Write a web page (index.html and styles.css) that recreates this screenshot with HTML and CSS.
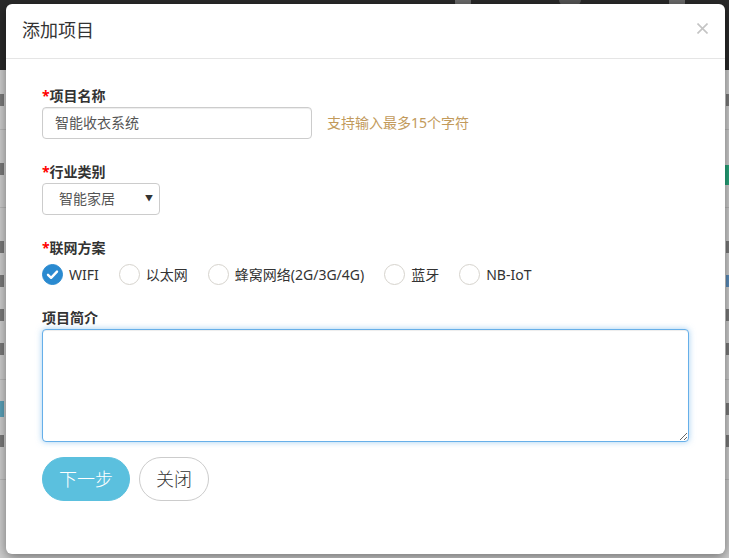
FILE: index.html
```html
<!DOCTYPE html>
<html lang="zh-CN">
<head>
<meta charset="utf-8">
<title>添加项目</title>
<link rel="stylesheet" href="styles.css">
</head>
<body>
<div class="page">
  <div class="navbar">
    <span class="nav-icon ni1"></span>
    <span class="nav-icon ni2"></span>
    <span class="nav-icon ni3"></span>
  </div>
  <div class="row row-a"><span class="mark-l"></span><span class="mark-r"></span></div>
  <div class="row row-b"><span class="mark-l"></span><span class="badge-green"></span></div>
  <div class="row row-c">
    <div class="line"><span class="mark-l"></span><span class="mark-r"></span></div>
    <div class="line"><span class="mark-l"></span><span class="mark-r blue"></span></div>
    <div class="line"><span class="mark-l"></span><span class="mark-r"></span></div>
    <div class="line"><span class="mark-l"></span><span class="mark-r"></span></div>
  </div>
  <div class="row row-d">
    <div class="line"><span class="mark-l teal"></span><span class="mark-r"></span></div>
    <div class="line"><span class="mark-l"></span><span class="mark-r"></span></div>
  </div>
</div>

<div class="modal">
  <div class="modal-header">
    <h4 class="modal-title">添加项目</h4>
    <button class="close" type="button" aria-label="关闭">
      <svg width="11" height="11" viewBox="0 0 11 11"><path d="M0.5 0.5L10.5 10.5M10.5 0.5L0.5 10.5" stroke="#c4c4c4" stroke-width="1.6" fill="none"/></svg>
    </button>
  </div>
  <div class="modal-body">
    <div class="group">
      <label class="label"><span class="req">*</span>项目名称</label>
      <div class="inline">
        <div class="control name-input">智能收衣系统</div>
        <span class="hint">支持输入最多15个字符</span>
      </div>
    </div>
    <div class="group">
      <label class="label"><span class="req">*</span>行业类别</label>
      <div class="control select-box"><span>智能家居</span><span class="caret">▼</span></div>
    </div>
    <div class="group">
      <label class="label"><span class="req">*</span>联网方案</label>
      <div class="radios">
        <div class="radio">
          <span class="circle checked">
            <svg width="21" height="21" viewBox="0 0 21 21"><path d="M6 10.8L9.1 13.8L15 7.6" stroke="#fff" stroke-width="2.4" fill="none" stroke-linecap="round" stroke-linejoin="round"/></svg>
          </span>
          <span class="rtext">WIFI</span>
        </div>
        <div class="radio"><span class="circle"></span><span class="rtext">以太网</span></div>
        <div class="radio"><span class="circle"></span><span class="rtext">蜂窝网络(2G/3G/4G)</span></div>
        <div class="radio"><span class="circle"></span><span class="rtext">蓝牙</span></div>
        <div class="radio"><span class="circle"></span><span class="rtext">NB-IoT</span></div>
      </div>
    </div>
    <div class="group last">
      <label class="label">项目简介</label>
      <textarea class="textarea"></textarea>
    </div>
    <div class="actions">
      <button class="btn btn-next" type="button">下一步</button>
      <button class="btn btn-close" type="button">关闭</button>
    </div>
  </div>
</div>
</body>
</html>
```
FILE: styles.css
```css
* { box-sizing: border-box; }
html, body { margin: 0; padding: 0; }
body {
  width: 729px;
  height: 558px;
  overflow: hidden;
  background: #cdcdcd;
  font-family: "Noto Sans", "Noto Sans CJK SC", sans-serif;
  color: #333;
  position: relative;
}

/* dimmed page behind the dialog */
.page { width: 729px; }
.navbar {
  height: 70px;
  background: #2a2a2a;
  display: flex;
  padding-left: 455px;
  gap: 88px;
}
.nav-icon {
  width: 16px;
  height: 6px;
  background: #6a6a6a;
  border-radius: 0 0 3px 3px;
}
.ni2 { width: 22px; border-radius: 0 0 11px 11px; background: #555; }
.row {
  border-bottom: 1px solid #b9b9b9;
  display: flex;
  flex-direction: column;
}
.row-a { height: 60px; flex-direction: row; justify-content: space-between; align-items: center; }
.row-b { height: 78px; flex-direction: row; justify-content: space-between; align-items: center; }
.row-c { height: 172px; padding-top: 30px; gap: 16px; }
.row-d { height: 100px; padding-top: 20px; gap: 14px; }
.line { display: flex; justify-content: space-between; align-items: center; height: 18px; }
.mark-l, .mark-r {
  width: 4px;
  height: 12px;
  background: #555;
  opacity: 0.7;
}
.mark-r { width: 3px; }
.blue { background: #2a6fb0; }
.teal { background: #2a8fb0; height: 16px; }
.badge-green {
  background: #27a57a;
  height: 20px;
  width: 4px;
  margin-top: 12px;
}

/* dialog */
.modal {
  position: absolute;
  top: 4px;
  left: 6px;
  width: 719px;
  height: 550px;
  background: #fff;
  border-radius: 6px;
  box-shadow: 0 3px 12px rgba(0, 0, 0, 0.45);
}
.modal-header {
  height: 55px;
  border-bottom: 1px solid #e5e5e5;
  padding: 14px 15px 0 16px;
  display: flex;
  justify-content: space-between;
  align-items: flex-start;
}
.modal-title {
  margin: 0;
  font-size: 18px;
  line-height: 25px;
  font-weight: normal;
  color: #333;
}
.close {
  border: 0;
  background: none;
  padding: 0;
  margin-top: 5px;
  margin-right: 2px;
  width: 11px;
  height: 11px;
  display: flex;
}
.modal-body {
  padding: 27px 36px 0 36px;
}
.group { margin-bottom: 23px; }
.group.last { margin-bottom: 0; }
.label {
  display: block;
  font-size: 14px;
  font-weight: bold;
  line-height: 20px;
  margin-bottom: 1px;
  color: #333;
}
.req { color: #f00; font-weight: bold; }
.inline { display: flex; align-items: center; gap: 15px; }
.control {
  height: 32px;
  border: 1px solid #ccc;
  border-radius: 4px;
  font-size: 14px;
  line-height: 30px;
  color: #555;
  box-shadow: inset 0 1px 1px rgba(0, 0, 0, 0.075);
}
.name-input { width: 270px; padding-left: 12px; }
.hint { color: #c29a5b; font-size: 14px; line-height: 20px; }
.select-box {
  width: 118px;
  padding: 0 6px 0 16px;
  display: flex;
  justify-content: space-between;
  align-items: center;
  box-shadow: none;
}
.caret { font-size: 8px; color: #333; line-height: 10px; margin-top: -2px; }
.radios {
  display: flex;
  gap: 20px;
  margin-top: 6px;
  height: 21px;
  align-items: center;
}
.radio { display: flex; align-items: center; gap: 6px; }
.circle {
  width: 21px;
  height: 21px;
  border-radius: 50%;
  border: 1px solid #d6d3cd;
  background: #fff;
  display: flex;
}
.circle.checked { background: #2a8ad0; border-color: #2a8ad0; }
.circle.checked svg { margin: -1px; }
.rtext { font-size: 14px; line-height: 20px; color: #333; }
.textarea {
  display: block;
  width: 647px;
  height: 113px;
  border: 1px solid #66afe9;
  border-radius: 4px;
  outline: 0;
  box-shadow: inset 0 1px 1px rgba(0, 0, 0, 0.075), 0 0 6px rgba(102, 175, 233, 0.6);
  margin: 0;
  font-family: inherit;
  resize: both;
}
.actions { display: flex; gap: 9px; margin-top: 15px; }
.btn {
  height: 44px;
  border-radius: 22px;
  padding: 0 16px;
  font-size: 18px;
  font-weight: 300;
  line-height: 42px;
  font-family: inherit;
  border: 1px solid #ccc;
  background: #fff;
  color: #333;
  cursor: pointer;
}
.btn-next { background: #5bc0de; border-color: #5bc0de; color: #fff; }
```
